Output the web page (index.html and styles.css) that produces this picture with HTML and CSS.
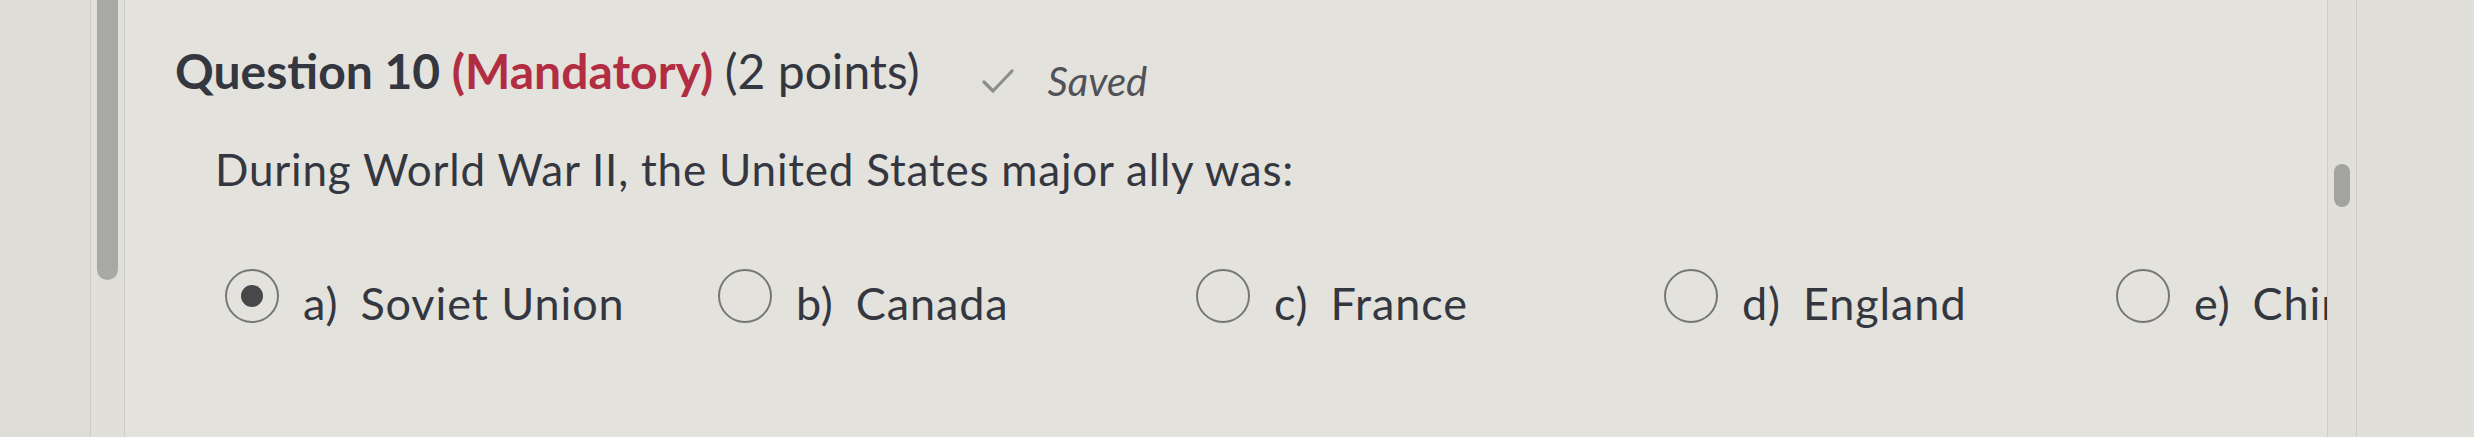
FILE: index.html
```html
<!DOCTYPE html>
<html lang="en">
<head>
  <meta charset="UTF-8">
  <title>Quiz - Question 10</title>
  <link rel="stylesheet" href="styles.css">
</head>
<body>

<div class="screen">
  <div class="gutter"></div>
  <div class="track track-left">
    <div class="thumb thumb-left"></div>
  </div>

  <div class="main">
    <div class="question">
      <div class="header">
        <h2 class="title">Question 10 <span class="mandatory">(Mandatory)</span> <span class="points">(2 points)</span></h2>
        <div class="saved">
          <svg class="check" width="32" height="24" viewBox="0 0 32 24">
            <polyline points="2,13 11,22 30,2" fill="none" stroke="#8d8d8b" stroke-width="3.2" stroke-linecap="round" stroke-linejoin="round"/>
          </svg>
          <span>Saved</span>
        </div>
      </div>

      <p class="prompt">During World War II, the United States major ally was:</p>

      <div class="answers">
        <label class="option">
          <span class="radio checked"></span>
          <span class="letter">a)</span><span class="answer">Soviet Union</span>
        </label>
        <label class="option">
          <span class="radio"></span>
          <span class="letter">b)</span><span class="answer">Canada</span>
        </label>
        <label class="option">
          <span class="radio"></span>
          <span class="letter">c)</span><span class="answer">France</span>
        </label>
        <label class="option">
          <span class="radio"></span>
          <span class="letter">d)</span><span class="answer">England</span>
        </label>
        <label class="option">
          <span class="radio"></span>
          <span class="letter">e)</span><span class="answer">China</span>
        </label>
      </div>
    </div>
  </div>

  <div class="track track-right">
    <div class="thumb thumb-right"></div>
  </div>
  <div class="gutter gutter-right"></div>
</div>

</body>
</html>
```

FILE: styles.css
```css
body {
  margin: 0;
  padding: 0;
  font-family: Lato, "Open Sans", sans-serif;
  background: #e2e1dc;
  color: #34373f;
}
.screen {
  display: flex;
  height: 437px;
  overflow: hidden;
}
.gutter {
  width: 90px;
  flex: none;
  background: #dddcd6;
}
.gutter-right {
  flex: 1;
  background: #e0dfda;
}
.track {
  flex: none;
  width: 31px;
  border-left: 1px solid #cdccc6;
  border-right: 1px solid #cdccc6;
  background: #e0dfda;
  display: flex;
  flex-direction: column;
}
.track-left {
  padding: 0 6px;
  width: 21px;
}
.track-right {
  width: 16px;
  padding: 164px 6px 0;
}
.thumb {
  background: #a8a8a4;
}
.thumb-left {
  height: 280px;
  border-radius: 0 0 11px 11px;
}
.thumb-right {
  height: 43px;
  border-radius: 8px;
  background: #a3a3a0;
}
.main {
  width: 2202px;
  flex: none;
  overflow: hidden;
  background: #e3e2dd;
}
.question {
  padding: 43px 0 0 50px;
}
.header {
  display: flex;
  align-items: baseline;
  gap: 62px;
}
.title {
  margin: 0;
  font-size: 48px;
  line-height: 56px;
  font-weight: 700;
  white-space: nowrap;
}
.mandatory {
  color: #b32d42;
}
.points {
  font-weight: 400;
}
.saved {
  display: flex;
  align-items: center;
  gap: 34px;
  font-size: 40px;
  font-style: italic;
  color: #515258;
  position: relative;
  top: 4px;
}
.check {
  display: block;
}
.prompt {
  margin: 44px 0 0 40px;
  font-size: 44px;
  letter-spacing: 0.8px;
  line-height: 48px;
}
.answers {
  display: grid;
  grid-template-columns: 493px 478px 468px 452px 460px;
  margin: 76px 0 0 50px;
}
.option {
  display: flex;
  align-items: flex-start;
  white-space: nowrap;
}
.radio {
  flex: none;
  width: 54px;
  height: 54px;
  box-sizing: border-box;
  border: 2px solid #767676;
  border-radius: 50%;
  margin-right: 24px;
  display: flex;
  align-items: center;
  justify-content: center;
}
.radio.checked::after {
  content: "";
  width: 22px;
  height: 22px;
  border-radius: 50%;
  background: #474849;
}
.letter, .answer {
  font-size: 45px;
  letter-spacing: 0.9px;
  line-height: 56px;
  margin-top: 6px;
}
.letter {
  margin-right: 22px;
}
```
